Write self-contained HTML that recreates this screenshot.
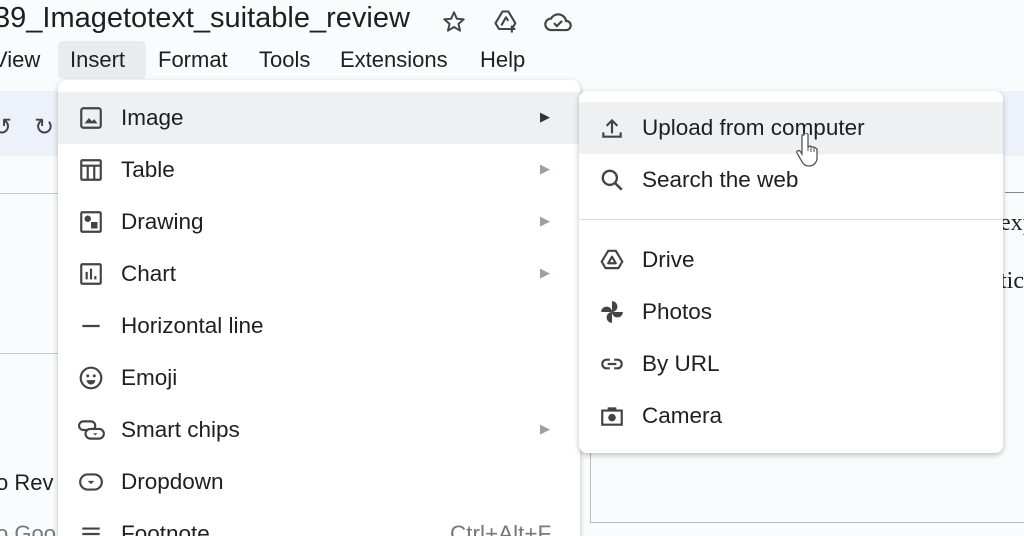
<!DOCTYPE html>
<html style="width:1024px;height:536px;overflow:hidden"><head><meta charset="utf-8"><style>
*{margin:0;padding:0;box-sizing:border-box}
body{width:1024px;height:536px;overflow:hidden;background:#f9fbfd;font-family:"Liberation Sans",sans-serif;color:#1f1f1f;position:relative}
.a{position:absolute;white-space:nowrap}
.title{left:-6px;top:2px;font-size:29px;color:#1f1f1f}
.mb{top:47px;font-size:22px;color:#1f1f1f}
.ins{left:58px;top:41px;width:88px;height:38px;background:#e9ecef;border-radius:5px}
.band{left:0;top:91px;width:1024px;height:65px;background:#edf2fa}
.menu{left:58px;top:80px;width:522px;height:480px;background:#fff;border-radius:8px;box-shadow:0 2px 6px rgba(0,0,0,.25)}
.sub{left:579px;top:91px;width:424px;height:362px;background:#fff;border-radius:8px;box-shadow:0 2px 6px rgba(0,0,0,.25)}
.row{position:absolute;left:0;width:100%;height:52px}
.row .t{position:absolute;left:63px;top:13px;font-size:22.5px;color:#1f1f1f}
.row svg{position:absolute;left:20px;top:13px}
.row .arr{position:absolute;left:482px;top:17px;font-size:13px;color:#9aa0a6}
.sub .row .t{left:63px}
.sub .row svg{left:20px}
</style></head><body>
<div class="a band"></div>
<div class="a title">39_Imagetotext_suitable_review</div>
<svg class="a" style="left:441px;top:9px" width="26" height="26" viewBox="0 0 24 24"><path d="M12 3l2.6 6 6.4.5-4.9 4.2 1.5 6.3L12 16.6 6.4 20l1.5-6.3L3 9.5 9.4 9z" fill="none" stroke="#444" stroke-width="1.8" stroke-linejoin="round"/></svg>
<svg class="a" style="left:492px;top:8px" width="28" height="28" viewBox="0 0 24 24"><path d="M9 3h5l6 10-3 5H6l-3-5z M8 15l4-7 2 3" fill="none" stroke="#444" stroke-width="1.8" stroke-linejoin="round"/><path d="M17 15v6M14 18h6" stroke="#444" stroke-width="1.8"/></svg>
<svg class="a" style="left:543px;top:9px" width="30" height="26" viewBox="0 0 26 22"><path d="M7 18h13a4 4 0 0 0 0-8 7 7 0 0 0-13-2 5 5 0 0 0 0 10z" fill="none" stroke="#444" stroke-width="1.9"/><path d="M9.5 12l2.5 2.5 4.5-4.5" fill="none" stroke="#444" stroke-width="1.9"/></svg>
<div class="a ins"></div>
<div class="a mb" style="left:-7px">View</div>
<div class="a mb" style="left:70px">Insert</div>
<div class="a mb" style="left:158px">Format</div>
<div class="a mb" style="left:259px">Tools</div>
<div class="a mb" style="left:340px">Extensions</div>
<div class="a mb" style="left:480px">Help</div>
<div class="a" style="left:-8px;top:113px;font-size:24px;color:#444">↺</div>
<div class="a" style="left:34px;top:113px;font-size:24px;color:#444">↻</div>
<div class="a" style="left:0;top:193px;width:60px;height:1px;background:#c8c8c8"></div>
<div class="a" style="left:0;top:353px;width:60px;height:1px;background:#c8c8c8"></div>
<div class="a" style="left:-4px;top:470px;font-size:22px;color:#1f1f1f">o Rev</div>
<div class="a" style="left:-4px;top:521px;font-size:22px;color:#777">o Goo</div>
<div class="a" style="left:590px;top:440px;width:1px;height:83px;background:#bbb"></div>
<div class="a" style="left:590px;top:522px;width:434px;height:1px;background:#bbb"></div>
<div class="a" style="left:1005px;top:192px;width:19px;height:1px;background:#888"></div>
<div class="a" style="left:1000px;top:210px;font-family:'Liberation Serif',serif;font-size:24px">exp</div>
<div class="a" style="left:1000px;top:268px;font-family:'Liberation Serif',serif;font-size:24px">tic</div>

<div class="a menu">
<div class="row" style="top:12px;background:#eef0f2"><svg width="26" height="26" viewBox="0 0 24 24"><rect x="3" y="3" width="18" height="18" rx="2" fill="none" stroke="#444" stroke-width="2"/><path d="M6 17l4-5 3 3 2-2 3 4z" fill="#444"/></svg><span class="t">Image</span><span class="arr" style="color:#333">▶</span></div>
<div class="row" style="top:64px"><svg width="26" height="26" viewBox="0 0 24 24"><rect x="3" y="3" width="18" height="18" rx="1" fill="none" stroke="#444" stroke-width="2"/><path d="M3 8h18M9 8v13M15 8v13" stroke="#444" stroke-width="2"/></svg><span class="t">Table</span><span class="arr">▶</span></div>
<div class="row" style="top:116px"><svg width="26" height="26" viewBox="0 0 24 24"><rect x="3" y="3" width="18" height="18" rx="1" fill="none" stroke="#444" stroke-width="2"/><circle cx="9" cy="9" r="3" fill="#444"/><rect x="12" y="12" width="6" height="6" fill="#444"/></svg><span class="t">Drawing</span><span class="arr">▶</span></div>
<div class="row" style="top:168px"><svg width="26" height="26" viewBox="0 0 24 24"><rect x="3" y="3" width="18" height="18" rx="1" fill="none" stroke="#444" stroke-width="2"/><path d="M8 17v-7M12 17V7M16 17v-3" stroke="#444" stroke-width="2"/></svg><span class="t">Chart</span><span class="arr">▶</span></div>
<div class="row" style="top:220px"><svg width="26" height="26" viewBox="0 0 24 24"><path d="M4 12h16" stroke="#444" stroke-width="2"/></svg><span class="t">Horizontal line</span></div>
<div class="row" style="top:272px"><svg width="26" height="26" viewBox="0 0 24 24"><circle cx="12" cy="12" r="9.5" fill="none" stroke="#444" stroke-width="2"/><circle cx="9" cy="10" r="1.4" fill="#444"/><circle cx="15" cy="10" r="1.4" fill="#444"/><path d="M8 14a4 4 0 0 0 8 0z" fill="#444"/></svg><span class="t">Emoji</span></div>
<div class="row" style="top:324px"><svg width="28" height="26" viewBox="0 0 26 24"><rect x="1" y="4" width="15" height="8" rx="4" fill="none" stroke="#444" stroke-width="2"/><rect x="7" y="11" width="17" height="9" rx="4.5" fill="#fff" stroke="#444" stroke-width="2"/><path d="M14 15l2 2 2-2z" fill="#444"/></svg><span class="t">Smart chips</span><span class="arr">▶</span></div>
<div class="row" style="top:376px"><svg width="26" height="26" viewBox="0 0 24 24"><rect x="2" y="5" width="20" height="14" rx="7" fill="none" stroke="#444" stroke-width="2"/><path d="M9 11l3 3 3-3z" fill="#444"/></svg><span class="t">Dropdown</span></div>
<div class="row" style="top:428px"><svg width="26" height="26" viewBox="0 0 24 24"><path d="M4 7h16M4 12h16" stroke="#444" stroke-width="2"/></svg><span class="t">Footnote</span><span class="t" style="left:392px;color:#777">Ctrl+Alt+F</span></div>
</div>

<div class="a sub">
<div class="row" style="top:11px;background:#eef0f2"><svg width="26" height="26" viewBox="0 0 24 24"><path d="M12 17V5M7 10l5-5 5 5M4 16v4h16v-4" fill="none" stroke="#444" stroke-width="2"/></svg><span class="t">Upload from computer</span></div>
<div class="row" style="top:63px"><svg width="26" height="26" viewBox="0 0 24 24"><circle cx="10" cy="10" r="6.5" fill="none" stroke="#444" stroke-width="2.2"/><path d="M15 15l6 6" stroke="#444" stroke-width="2.4"/></svg><span class="t">Search the web</span></div>
<div style="position:absolute;left:0;top:128px;width:100%;height:1px;background:#dadce0"></div>
<div class="row" style="top:143px"><svg width="26" height="26" viewBox="0 0 24 24"><path d="M8.5 3.5h7l6 10-3.5 6H6l-3.5-6z" fill="none" stroke="#444" stroke-width="2" stroke-linejoin="round"/><path d="M12 9l-3.5 6h7z" fill="none" stroke="#444" stroke-width="2" stroke-linejoin="round"/></svg><span class="t">Drive</span></div>
<div class="row" style="top:195px"><svg width="26" height="26" viewBox="0 0 24 24"><path d="M12 12V2a5 5 0 0 1 0 10zM12 12h10a5 5 0 0 1-10 0zM12 12v10a5 5 0 0 1 0-10zM12 12H2a5 5 0 0 1 10 0z" fill="#444"/></svg><span class="t">Photos</span></div>
<div class="row" style="top:247px"><svg width="26" height="26" viewBox="0 0 24 24"><path d="M10 8H7a4 4 0 0 0 0 8h3M14 8h3a4 4 0 0 1 0 8h-3M8 12h8" fill="none" stroke="#444" stroke-width="2"/></svg><span class="t">By URL</span></div>
<div class="row" style="top:299px"><svg width="26" height="26" viewBox="0 0 24 24"><path d="M3 7h18v13H3z" fill="none" stroke="#444" stroke-width="2"/><path d="M8 4h8v3H8z" fill="#444"/><circle cx="12" cy="13.5" r="3.5" fill="#444"/></svg><span class="t">Camera</span></div>
</div>
<svg class="a" style="left:796px;top:133px" width="26" height="36" viewBox="0 0 26 36"><path d="M8 2a2 2 0 0 1 4 0v12l2-1 2 1 2 0 3 2v9c0 4-3 8-8 8-4 0-6-2-8-6l-4-7c-1-2 1-3 3-2l2 3V2z" fill="#fff" stroke="#555" stroke-width="1.3"/><path d="M12 10v8M15 13v6M18 14v5" stroke="#555" stroke-width="1"/></svg>
</body></html>
